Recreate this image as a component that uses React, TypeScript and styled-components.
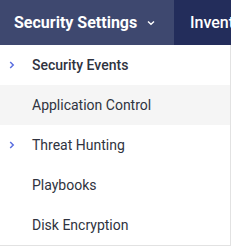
import React from 'react';
import styled, { createGlobalStyle } from 'styled-components';

const GlobalStyle = createGlobalStyle`
  html, body {
    margin: 0;
    padding: 0;
    background: #ffffff;
    font-family: Roboto, "Liberation Sans", Arial, sans-serif;
  }
`;

const Page = styled.div`
  width: 231px;
  height: 246px;
  overflow: hidden;
  display: flex;
  flex-direction: column;
`;

const NavBar = styled.nav`
  display: flex;
  height: 45px;
  background: #232d5b;
  flex-shrink: 0;
  overflow: hidden;
`;

const NavItem = styled.div<{ active?: boolean }>`
  display: flex;
  align-items: center;
  gap: 10px;
  padding: 0 16px 0 ${p => (p.active ? '14px' : '16px')};
  background: ${p => (p.active ? '#3e486f' : 'transparent')};
  color: #ffffff;
  font-size: 16px;
  font-weight: ${p => (p.active ? 700 : 500)};
  white-space: nowrap;
  width: ${p => (p.active ? '174px' : 'auto')};
  flex-shrink: 0;
  box-sizing: border-box;
`;

const Menu = styled.ul`
  list-style: none;
  margin: 0;
  padding: 0;
  width: 231px;
  box-sizing: border-box;
  border-right: 1px solid #e2e2e2;
  border-bottom: 1px solid #e2e2e2;
`;

const MenuItem = styled.li<{ hovered?: boolean; strong?: boolean }>`
  display: flex;
  align-items: center;
  height: 40px;
  padding-left: 9px;
  background: ${p => (p.hovered ? '#f5f5f5' : '#ffffff')};
  color: #2f3340;
  font-size: 14px;
  font-weight: ${p => (p.strong ? 500 : 400)};
`;

const Caret = styled.span`
  width: 23px;
  display: flex;
  align-items: center;
  color: #5a6ee0;
`;

const ChevronRight = () => (
  <svg width="6" height="8" viewBox="0 0 6 8" fill="none">
    <path d="M1.2 1 L4.2 4 L1.2 7" stroke="currentColor" strokeWidth="1.5" />
  </svg>
);

const ChevronDown = () => (
  <svg width="8" height="6" viewBox="0 0 8 6" fill="none">
    <path d="M1 1.5 L4 4.3 L7 1.5" stroke="currentColor" strokeWidth="1.4" />
  </svg>
);

const items = [
  { label: 'Security Events', sub: true, strong: true },
  { label: 'Application Control', hovered: true },
  { label: 'Threat Hunting', sub: true },
  { label: 'Playbooks' },
  { label: 'Disk Encryption' },
];

export default function App() {
  return (
    <Page>
      <GlobalStyle />
      <NavBar>
        <NavItem active>
          Security Settings
          <ChevronDown />
        </NavItem>
        <NavItem>Inventory</NavItem>
      </NavBar>
      <Menu>
        {items.map(it => (
          <MenuItem key={it.label} hovered={it.hovered} strong={it.strong}>
            <Caret>{it.sub && <ChevronRight />}</Caret>
            {it.label}
          </MenuItem>
        ))}
      </Menu>
    </Page>
  );
}
